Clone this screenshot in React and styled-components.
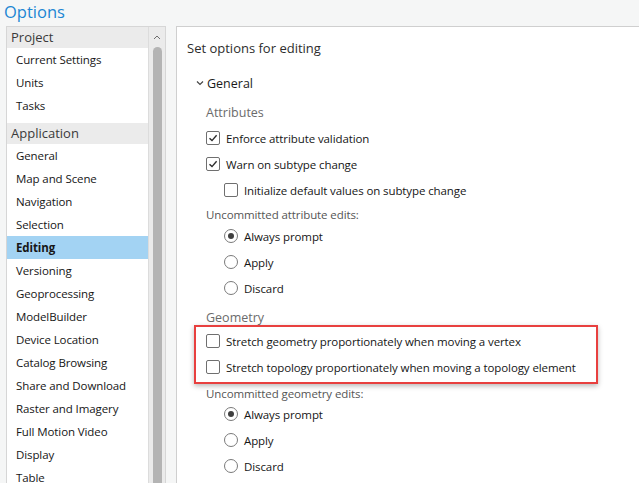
import styled, { createGlobalStyle } from 'styled-components';

const GlobalStyle = createGlobalStyle`
  html, body {
    margin: 0;
    padding: 0;
    background: #f5f6f6;
    font-family: "Open Sans", "Noto Sans", "Liberation Sans", sans-serif;
    color: #1b1b1b;
  }
`

const Page = styled.div`
  width: 639px;
  height: 483px;
  overflow: hidden;
  display: flex;
  flex-direction: column;
`
const TitleBar = styled.div`
  height: 26px;
  padding-left: 4px;
  font-size: 16.5px;
  line-height: 24px;
  color: #1c86d3;
`
const Body = styled.div`
  flex: 1;
  display: flex;
  gap: 10px;
  padding-left: 6px;
  min-height: 0;
`
const Sidebar = styled.div`
  width: 158px;
  border: 1px solid #d6d6d6;
  border-bottom: none;
  display: flex;
  background: #fff;
`
const NavList = styled.div`
  flex: 1;
  display: flex;
  flex-direction: column;
`
const GroupHeader = styled.div`
  height: 21px;
  line-height: 21px;
  padding-left: 4px;
  background: #ebebeb;
  font-size: 13px;
  color: #3a3a3a;
`
const Group = styled.div`
  padding-bottom: ${p => p.$pad || 0}px;
`
const NavItem = styled.div`
  height: 23px;
  line-height: 23px;
  padding-left: 9px;
  font-size: 11.5px;
  letter-spacing: -0.1px;
  background: ${p => (p.$active ? '#a3d3f3' : 'transparent')};
  font-weight: ${p => (p.$active ? 700 : 400)};
  color: #161616;
`
const Scrollbar = styled.div`
  width: 16px;
  border-left: 1px solid #dcdcdc;
  background: #ebebeb;
  display: flex;
  flex-direction: column;
  align-items: center;
`
const ScrollArrow = styled.div`
  height: 20px;
  display: flex;
  align-items: center;
  justify-content: center;
`
const Thumb = styled.div`
  width: 9px;
  flex: 1;
  margin-left: 1px;
  background: #b4b4b4;
  border-radius: 5px 5px 0 0;
`
const Content = styled.div`
  flex: 1;
  background: #fff;
  border-left: 1px solid #cfcfcf;
  border-top: 1px solid #cfcfcf;
  padding-left: 10px;
  display: flex;
  flex-direction: column;
`
const Heading = styled.div`
  margin-top: 11px;
  line-height: 20px;
  font-size: 13px;
  color: #2d2d2d;
`
const Expander = styled.div`
  margin-top: 15px;
  padding-left: 9px;
  height: 20px;
  display: flex;
  align-items: center;
  gap: 3px;
  font-size: 12.5px;
  color: #1b1b1b;
`
const SectionLabel = styled.div`
  margin-top: ${p => p.$mt}px;
  padding-left: 19px;
  line-height: ${p => p.$lh || 20}px;
  font-size: 12.5px;
  color: #6b6b6b;
`
const SubLabel = styled.div`
  margin-top: ${p => p.$mt}px;
  padding-left: 19px;
  height: 16px;
  line-height: 16px;
  font-size: 11.5px;
  letter-spacing: -0.1px;
  color: #555;
`
const OptionList = styled.div`
  margin-top: ${p => p.$mt || 0}px;
  display: flex;
  flex-direction: column;
`
const OptionRow = styled.div`
  height: 26px;
  display: flex;
  align-items: center;
  gap: 6px;
  padding-left: ${p => p.$indent}px;
  font-size: 11.5px;
  letter-spacing: -0.1px;
  color: #161616;
`
const Box = styled.span`
  width: 14px;
  height: 14px;
  box-sizing: border-box;
  border: 1px solid #6f6f6f;
  border-radius: 2px;
  display: flex;
  align-items: center;
  justify-content: center;
  background: #fff;
  flex-shrink: 0;
`
const Radio = styled.span`
  width: 14px;
  height: 14px;
  box-sizing: border-box;
  border: 1px solid #7a7a7a;
  border-radius: 50%;
  display: flex;
  align-items: center;
  justify-content: center;
  background: #fff;
  flex-shrink: 0;
  &::after {
    content: '';
    width: 6px;
    height: 6px;
    border-radius: 50%;
    background: ${p => (p.$on ? '#3f3f3f' : 'transparent')};
  }
`
const Highlight = styled.div`
  margin-left: 7px;
  margin-top: -2px;
  width: 400px;
  border: 2px solid #e8403f;
  padding: 1px 0 2px;
  box-shadow: 0 2px 5px rgba(0, 0, 0, 0.28);
  display: flex;
  flex-direction: column;
`

const Check = ({ on }) => (
  <Box>
    {on && (
      <svg width="10" height="10" viewBox="0 0 10 10">
        <polyline points="1.5,5.2 4,7.6 8.6,2.2" fill="none" stroke="#2b2b2b" strokeWidth="1.4" />
      </svg>
    )}
  </Box>
)

const CheckOption = ({ on, indent = 19, children }) => (
  <OptionRow $indent={indent}>
    <Check on={on} />
    {children}
  </OptionRow>
)

const RadioOption = ({ on, children }) => (
  <OptionRow $indent={37}>
    <Radio $on={on} />
    {children}
  </OptionRow>
)

const RadioGroup = ({ mt }) => (
  <OptionList $mt={mt}>
    <RadioOption on>Always prompt</RadioOption>
    <RadioOption>Apply</RadioOption>
    <RadioOption>Discard</RadioOption>
  </OptionList>
)

const projectItems = ['Current Settings', 'Units', 'Tasks']
const appItems = [
  'General', 'Map and Scene', 'Navigation', 'Selection', 'Editing', 'Versioning',
  'Geoprocessing', 'ModelBuilder', 'Device Location', 'Catalog Browsing',
  'Share and Download', 'Raster and Imagery', 'Full Motion Video', 'Display', 'Table',
]

export default function App() {
  return (
    <Page>
      <GlobalStyle />
      <TitleBar>Options</TitleBar>
      <Body>
        <Sidebar>
          <NavList>
            <GroupHeader>Project</GroupHeader>
            <Group $pad={6}>
              {projectItems.map(i => <NavItem key={i}>{i}</NavItem>)}
            </Group>
            <GroupHeader>Application</GroupHeader>
            <Group>
              {appItems.map(i => <NavItem key={i} $active={i === 'Editing'}>{i}</NavItem>)}
            </Group>
          </NavList>
          <Scrollbar>
            <ScrollArrow>
              <svg width="8" height="5" viewBox="0 0 8 5">
                <polyline points="1,4 4,1 7,4" fill="none" stroke="#6d6d6d" strokeWidth="1" />
              </svg>
            </ScrollArrow>
            <Thumb />
          </Scrollbar>
        </Sidebar>
        <Content>
          <Heading>Set options for editing</Heading>
          <Expander>
            <svg width="8" height="6" viewBox="0 0 8 6">
              <polyline points="1,1.5 4,4.5 7,1.5" fill="none" stroke="#444" strokeWidth="1.2" />
            </svg>
            General
          </Expander>
          <SectionLabel $mt={10}>Attributes</SectionLabel>
          <OptionList $mt={2}>
            <CheckOption on>Enforce attribute validation</CheckOption>
            <CheckOption on>Warn on subtype change</CheckOption>
            <CheckOption indent={37}>Initialize default values on subtype change</CheckOption>
          </OptionList>
          <SubLabel $mt={4}>Uncommitted attribute edits:</SubLabel>
          <RadioGroup />
          <SectionLabel $mt={8} $lh={18}>Geometry</SectionLabel>
          <Highlight>
            <CheckOption indent={10}>Stretch geometry proportionately when moving a vertex</CheckOption>
            <CheckOption indent={10}>Stretch topology proportionately when moving a topology element</CheckOption>
          </Highlight>
          <SubLabel $mt={2}>Uncommitted geometry edits:</SubLabel>
          <RadioGroup mt={-1} />
        </Content>
      </Body>
    </Page>
  )
}
